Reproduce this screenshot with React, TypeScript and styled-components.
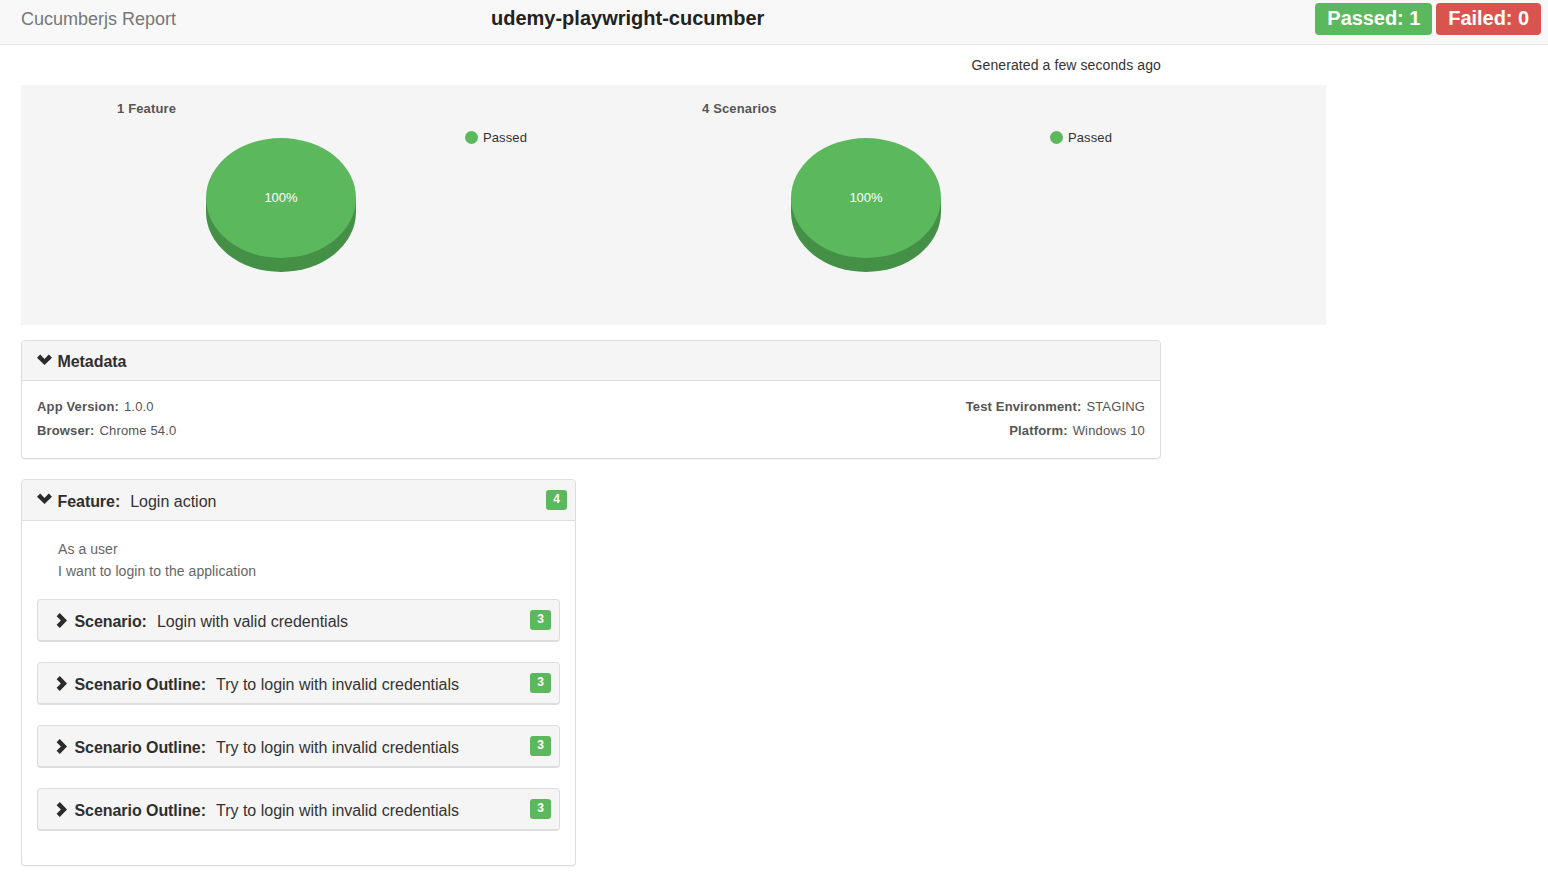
import React from "react";
import styled, { createGlobalStyle } from "styled-components";

const GlobalStyle = createGlobalStyle`
  html, body {
    margin: 0;
    padding: 0;
    background: #fff;
    color: #333;
    font-family: "Liberation Sans", Arial, sans-serif;
    font-size: 14px;
    line-height: 20px;
  }
  * {
    box-sizing: border-box;
  }
`;

const Navbar = styled.header`
  display: flex;
  align-items: flex-start;
  height: 45px;
  padding: 0 7px 0 21px;
  background: #f8f8f8;
  border-bottom: 1px solid #e7e7e7;
`;

const Brand = styled.div`
  width: 470px;
  font-size: 18px;
  line-height: 38px;
  color: #777;
`;

const ProjectTitle = styled.h1`
  flex: 1;
  margin: 0;
  font-size: 20px;
  line-height: 36px;
  font-weight: 700;
  color: #222;
`;

const StatusGroup = styled.div`
  display: flex;
  gap: 4px;
  padding-top: 3px;
`;

const StatusLabel = styled.span<{ $color: string }>`
  height: 32px;
  padding: 0 12px;
  border-radius: 4px;
  background: ${(p) => p.$color};
  color: #fff;
  font-size: 20px;
  line-height: 30px;
  font-weight: 700;
  letter-spacing: -0.05px;
`;

const Main = styled.main`
  display: flex;
  flex-direction: column;
  align-items: flex-start;
  padding: 0 21px;
`;

const Generated = styled.div`
  width: 1140px;
  height: 40px;
  padding-top: 10px;
  text-align: right;
  letter-spacing: 0.1px;
  color: #333;
`;

const ChartsPanel = styled.section`
  display: flex;
  width: 1305px;
  height: 240px;
  margin-bottom: 15px;
  background: #f5f5f5;
`;

const Chart = styled.div`
  width: 585px;
`;

const ChartTitle = styled.div`
  padding: 14px 0 0 96px;
  height: 53px;
  font-size: 13px;
  line-height: 20px;
  font-weight: 700;
  letter-spacing: 0.15px;
  color: #555;
`;

const ChartBody = styled.div`
  display: flex;
  align-items: flex-start;
  padding-left: 185px;
`;

const Legend = styled.div`
  display: flex;
  align-items: flex-start;
  gap: 5px;
  margin: -10px 0 0 109px;
  font-size: 13px;
  line-height: 20px;
  letter-spacing: 0.1px;
  color: #333;
`;

const LegendDot = styled.span`
  width: 13px;
  height: 13px;
  margin-top: 2.5px;
  border-radius: 50%;
  background: #5cb85c;
`;

const Panel = styled.section<{ $width: number; $height: number }>`
  width: ${(p) => p.$width}px;
  height: ${(p) => p.$height}px;
  margin-bottom: 20px;
  background: #fff;
  border: 1px solid #ddd;
  border-radius: 4px;
  box-shadow: 0 1px 1px rgba(0, 0, 0, 0.05);
`;

const PanelHeader = styled.div<{ $height: number }>`
  display: flex;
  align-items: center;
  height: ${(p) => p.$height}px;
  padding: 0 8px 0 15px;
  background: #f5f5f5;
  border-bottom: 1px solid #ddd;
  border-radius: 3px 3px 0 0;
  font-size: 16px;
  color: #333;
`;

const HeaderTitle = styled.span`
  flex: 1;
  margin-left: 6.5px;
  padding-top: 3px;
  line-height: 20px;
`;

const Strong = styled.b`
  font-weight: 700;
  margin-right: 10px;
  letter-spacing: -0.06px;
  color: #2f2f2f;
`;

const Count = styled.span`
  width: 21px;
  height: 20px;
  border-radius: 3px;
  background: #5cb85c;
  color: #fff;
  font-size: 12px;
  line-height: 19px;
  font-weight: 700;
  text-align: center;
`;

const MetaBody = styled.div`
  display: flex;
  justify-content: space-between;
  padding: 14px 15px 0;
  font-size: 13px;
  line-height: 24px;
  letter-spacing: 0.15px;
  color: #555;
`;

const MetaColumn = styled.div<{ $right?: boolean }>`
  text-align: ${(p) => (p.$right ? "right" : "left")};
`;

const MetaRow = styled.div`
  height: 24px;
`;

const MetaKey = styled.b`
  font-weight: 700;
  margin-right: 5px;
`;

const FeatureBody = styled.div`
  padding: 17px 15px 0;
`;

const Description = styled.div`
  padding-left: 21px;
  margin-bottom: 17px;
  line-height: 22px;
  letter-spacing: 0.06px;
  color: #666;
`;

const ScenarioList = styled.div`
  display: flex;
  flex-direction: column;
  gap: 20px;
`;

const Scenario = styled.div`
  display: flex;
  align-items: center;
  height: 43px;
  padding: 0 8px 0 18px;
  background: #f5f5f5;
  border: 1px solid #ddd;
  border-bottom: 2px solid #ddd;
  border-radius: 4px;
  font-size: 16px;
  color: #333;
`;

const ChevronDownIcon = styled.svg`
  flex: none;
  margin: -3px -1px 0 0;
  fill: #2b2b2b;
`;

const ChevronRightIcon = styled.svg`
  flex: none;
  margin: 1px 1px 0 0;
  fill: #2b2b2b;
`;

const ChevronDown = () => (
  <ChevronDownIcon width="15" height="11" viewBox="0 0 15 11">
    <path d="M0 3.8 3.2.6 7.5 4.9 11.8.6 15 3.8 7.5 11z" />
  </ChevronDownIcon>
);

const ChevronRight = () => (
  <ChevronRightIcon width="11" height="15" viewBox="0 0 11 15">
    <path d="M3.8 0 .6 3.2 4.9 7.5.6 11.8 3.8 15 11 7.5z" />
  </ChevronRightIcon>
);

const PieLabel = styled.text`
  font-family: "Liberation Sans", Arial, sans-serif;
  font-size: 13px;
  fill: #fff;
`;

const Pie = () => (
  <svg width="150" height="135" viewBox="0 0 150 135">
    <path d="M0 60 V74 A75 60 0 0 0 150 74 V60z" fill="#459047" />
    <ellipse cx="75" cy="60" rx="75" ry="60" fill="#5cb85c" />
    <PieLabel x="75" y="64" textAnchor="middle">
      100%
    </PieLabel>
  </svg>
);

const charts = ["1 Feature", "4 Scenarios"];

const scenarios = [
  { kind: "Scenario", name: "Login with valid credentials" },
  { kind: "Scenario Outline", name: "Try to login with invalid credentials" },
  { kind: "Scenario Outline", name: "Try to login with invalid credentials" },
  { kind: "Scenario Outline", name: "Try to login with invalid credentials" },
];

export default function App() {
  return (
    <>
      <GlobalStyle />
      <Navbar>
        <Brand>Cucumberjs Report</Brand>
        <ProjectTitle>udemy-playwright-cucumber</ProjectTitle>
        <StatusGroup>
          <StatusLabel $color="#5cb85c">Passed: 1</StatusLabel>
          <StatusLabel $color="#d9534f">Failed: 0</StatusLabel>
        </StatusGroup>
      </Navbar>
      <Main>
        <Generated>Generated a few seconds ago</Generated>
        <ChartsPanel>
          {charts.map((title) => (
            <Chart key={title}>
              <ChartTitle>{title}</ChartTitle>
              <ChartBody>
                <Pie />
                <Legend>
                  <LegendDot />
                  Passed
                </Legend>
              </ChartBody>
            </Chart>
          ))}
        </ChartsPanel>
        <Panel $width={1140} $height={119}>
          <PanelHeader $height={40}>
            <ChevronDown />
            <HeaderTitle>
              <Strong>Metadata</Strong>
            </HeaderTitle>
          </PanelHeader>
          <MetaBody>
            <MetaColumn>
              <MetaRow>
                <MetaKey>App Version:</MetaKey>1.0.0
              </MetaRow>
              <MetaRow>
                <MetaKey>Browser:</MetaKey>Chrome 54.0
              </MetaRow>
            </MetaColumn>
            <MetaColumn $right>
              <MetaRow>
                <MetaKey>Test Environment:</MetaKey>STAGING
              </MetaRow>
              <MetaRow>
                <MetaKey>Platform:</MetaKey>Windows 10
              </MetaRow>
            </MetaColumn>
          </MetaBody>
        </Panel>
        <Panel $width={555} $height={387}>
          <PanelHeader $height={41}>
            <ChevronDown />
            <HeaderTitle>
              <Strong>Feature:</Strong>Login action
            </HeaderTitle>
            <Count>4</Count>
          </PanelHeader>
          <FeatureBody>
            <Description>
              As a user
              <br />I want to login to the application
            </Description>
            <ScenarioList>
              {scenarios.map((s, i) => (
                <Scenario key={i}>
                  <ChevronRight />
                  <HeaderTitle>
                    <Strong>{s.kind}:</Strong>
                    {s.name}
                  </HeaderTitle>
                  <Count>3</Count>
                </Scenario>
              ))}
            </ScenarioList>
          </FeatureBody>
        </Panel>
      </Main>
    </>
  );
}
